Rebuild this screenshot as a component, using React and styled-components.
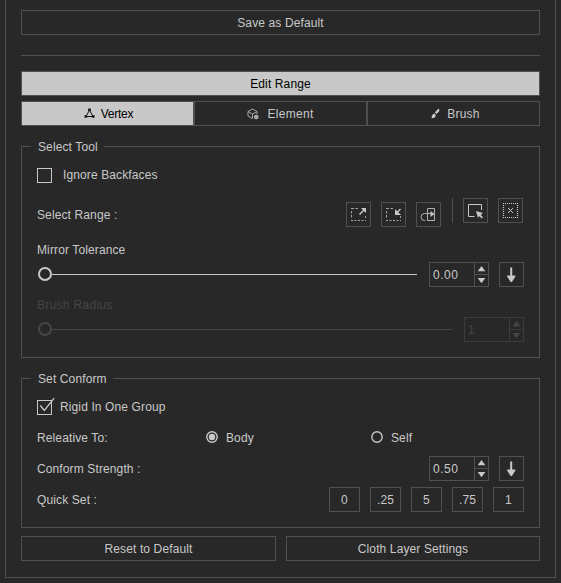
import React from "react";
import styled, { createGlobalStyle, css } from "styled-components";

const BG = "#282828";
const LINE = "#505050";
const INK = "#c8c8c8";
const DIM = "#464646";

const GlobalStyle = createGlobalStyle`
  * { box-sizing: border-box; }
  body {
    margin: 0;
    background: ${BG};
    color: ${INK};
    font: 12px/16px "Liberation Sans", Arial, sans-serif;
    overflow: hidden;
  }
`;

const Panel = styled.main`
  width: 551px;
  height: 578px;
  margin-left: 5px;
  padding: 10px 15px 0;
  border: 1px solid ${LINE};
  border-top: 0;
`;

const Label = styled.span`
  letter-spacing: ${(p) => p.$track ?? 0.12}px;
  margin-bottom: ${(p) => p.$lift ?? 0}px;
  white-space: pre;
  color: ${(p) => (p.$dim ? DIM : "inherit")};
`;

const Button = styled.button`
  display: flex;
  align-items: center;
  justify-content: center;
  width: ${(p) => p.$w ?? 25}px;
  height: 25px;
  padding: 0;
  font: inherit;
  border: 1px solid ${LINE};
  background: ${(p) => (p.$on ? INK : BG)};
  color: ${(p) => (p.$on ? "#000" : INK)};
`;

const Rule = styled.hr`
  height: 1px;
  margin: 20px 0 15px;
  border: 0;
  background: ${LINE};
`;

const Tabs = styled.nav`
  display: flex;
  margin-top: 5px;
`;

const TabIcon = styled.svg`
  flex: none;
  margin-left: ${(p) => p.$indent ?? 0}px;
  margin-right: ${(p) => p.$gap}px;
`;

const Group = styled.section`
  display: flex;
  flex-direction: column;
  height: ${(p) => p.$h}px;
  margin-top: ${(p) => p.$top}px;
  padding: 0 15px;
  border: 1px solid ${LINE};
`;

const Legend = styled.h2`
  align-self: flex-start;
  flex: none;
  height: 16px;
  margin: -8px 0 0 -6px;
  padding: 0 6px 0 7px;
  font: inherit;
  background: ${BG};
`;

const Row = styled.div`
  display: flex;
  flex: none;
  align-items: center;
  height: ${(p) => p.$h ?? 25}px;
  margin-top: ${(p) => p.$top ?? 0}px;
`;

const Spacer = styled.div`
  flex: 1;
`;

const Check = styled.svg`
  flex: none;
  margin-right: ${(p) => p.$gap}px;
  overflow: visible;
`;

const Tools = styled.div`
  display: flex;
  gap: ${(p) => p.$gap ?? 10}px;
  margin-right: ${(p) => p.$right ?? 0}px;
`;

const ToolPair = styled(Tools)`
  align-self: flex-start;
  padding-left: 10px;
  margin-left: 11px;
  border-left: 1px solid ${LINE};
`;

const RangeTools = styled(Tools)`
  align-self: flex-end;
`;

const RangeLabel = styled(Label)`
  padding-top: 4px;
`;

const Knob = styled.div`
  flex: none;
  width: 14px;
  height: 14px;
  margin: 0 0 1px 1px;
  border: 2px solid ${(p) => (p.$dim ? DIM : INK)};
  border-radius: 50%;
`;

const Track = styled.div`
  flex: 1;
  height: 1px;
  margin-right: 12px;
  background: ${(p) => (p.$dim ? DIM : INK)};
`;

const SpinBox = styled.div`
  display: grid;
  grid-template-columns: 1fr 14px;
  flex: none;
  width: 60px;
  height: 25px;
  border: 1px solid ${(p) => (p.$dim ? "#3c3c3c" : LINE)};
  color: ${(p) => (p.$dim ? DIM : INK)};
  ${(p) =>
    p.$gap &&
    css`
      margin-right: 10px;
    `}
`;

const SpinValue = styled.span`
  padding-left: 3px;
  line-height: 24px;
  letter-spacing: 0.5px;
`;

const SpinArrows = styled.svg`
  display: block;
`;

const Radio = styled.label`
  display: flex;
  align-items: center;
  gap: 8px;
  width: ${(p) => p.$w}px;
`;

const RadioDot = styled.svg`
  flex: none;
  margin-top: -1px;
`;

const Footer = styled.footer`
  display: flex;
  gap: 10px;
  margin-top: 8px;
`;

function Spin({ value, dim, gap }) {
  const line = dim ? "#3c3c3c" : LINE;
  return (
    <SpinBox $dim={dim} $gap={gap}>
      <SpinValue>{value}</SpinValue>
      <SpinArrows width="14" height="23">
        <path d="M0 0h1v23H0zM1 11h13v1H1z" fill={line} />
        <path d="M7.500 3l3.800 5.200H3.700zM7.500 20.200l3.800-5.200H3.700z" fill="currentColor" />
      </SpinArrows>
    </SpinBox>
  );
}

function ResetButton() {
  return (
    <Button aria-label="Apply">
      <svg width="23" height="23">
        <path d="M10.200 4.500h2V12.500H15.300v1.200L11.900 19h-1.200L7.200 13.700V12.500h3z" fill={INK} />
      </svg>
    </Button>
  );
}

function CheckBox({ checked, gap }) {
  return (
    <Check width="15" height="15" $gap={gap}>
      <rect x=".5" y=".5" width="14" height="14" fill="none" stroke={INK} />
      {checked && (
        <path d="M3.3 5.500l4 5L17.200-1.800" fill="none" stroke={INK} strokeWidth="1.300" />
      )}
    </Check>
  );
}

function RadioMark({ on }) {
  return (
    <RadioDot width="12" height="12">
      <circle cx="6" cy="6" r="5.2" fill="none" stroke={INK} strokeWidth="1.4" />
      {on && <circle cx="6" cy="6" r="3.2" fill={INK} />}
    </RadioDot>
  );
}

const ToolIcon = ({ children }) => (
  <svg width="23" height="23" fill="none" stroke={INK}>
    {children}
  </svg>
);

const Dashes = () => (
  <path
    stroke="#a4a4a4"
    d="M4 5.500h3M8.500 5.500h2.500M4.500 8v2.500M4.500 12v2.500M4 17.500h2M7.500 17.500h2M11 17.500h2M14.500 17.500h2M18 17.500h1M18.500 13v2"
  />
);

export default function App() {
  return (
    <>
      <GlobalStyle />
      <Panel>
        <Button $w={519}>
          <Label>Save as Default</Label>
        </Button>
        <Rule />
        <Button $w={519} $on>
          <Label>Edit Range</Label>
        </Button>
        <Tabs>
          <Button $w={173} $on>
            <TabIcon width="11" height="11" $gap={6} $indent={2}>
              <path d="M5.500 2L2 8.500h7z" fill="none" stroke="#111" />
              <path d="M4.200.5h2.600v2.600H4.200zM.5 7.200h2.600v2.600H.5zM7.900 7.200h2.600v2.600H7.900z" fill="#111" />
            </TabIcon>
            <Label $track={-0.25}>Vertex</Label>
          </Button>
          <Button $w={173}>
            <TabIcon width="12" height="12" $gap={8}>
              <path
                d="M5 10.500L1 8V3.500L5.500 1 10 3.500V6M1 3.500L5.500 6 10 3.500M5.500 6v4.500"
                fill="none"
                stroke="#a8a8a8"
              />
              <path d="M9.200 6.500l2.300 1.300v2.500L9.200 11.600 7 10.300V7.800z" fill="#a8a8a8" />
            </TabIcon>
            <Label $track={0.3}>Element</Label>
          </Button>
          <Button $w={173}>
            <TabIcon width="9" height="11" $gap={7} $indent={4}>
              <path d="M7.200.8L8.500 1.500 8 3.500 5.500 6 3.800 4.400z" fill={INK} />
              <path d="M3 5.200l1.800 1.700-.8 2.500L.5 10.500 1 7.500z" fill={INK} />
            </TabIcon>
            <Label $track={0.2}>Brush</Label>
          </Button>
        </Tabs>

        <Group $top={20} $h={212}>
          <Legend>
            <Label>Select Tool</Label>
          </Legend>
          <Row $top={8}>
            <CheckBox gap={11} />
            <Label $lift={2}>Ignore Backfaces</Label>
          </Row>
          <Row $top={10} $h={29}>
            <RangeLabel>Select Range :</RangeLabel>
            <Spacer />
            <RangeTools>
              <Button aria-label="Grow selection">
                <ToolIcon>
                  <Dashes />
                  <path d="M12.500 11.500l5-5" strokeWidth="1.400" />
                  <path d="M14 5h5v5z" fill={INK} stroke="none" />
                </ToolIcon>
              </Button>
              <Button aria-label="Shrink selection">
                <ToolIcon>
                  <Dashes />
                  <path d="M18.500 6L15 9.500" strokeWidth="1.400" />
                  <path d="M13 6v6h6z" fill={INK} stroke="none" />
                </ToolIcon>
              </Button>
              <Button aria-label="Mirror selection">
                <ToolIcon>
                  <path d="M10.500 5.500h7v12h-7z" stroke="#b0b0b0" />
                  <path d="M8.500 17.500H7.500a3.500 3.500 0 010-7H14" stroke="#b0b0b0" />
                  <path d="M13.500 8l4 3-4 3z" fill={INK} stroke="none" />
                </ToolIcon>
              </Button>
            </RangeTools>
            <ToolPair $right={1}>
              <Button aria-label="Box select">
                <ToolIcon>
                  <path d="M10.500 17.500H4.500v-12h13V11" />
                  <path d="M14 14l4.300 4.800" strokeWidth="1.800" />
                  <path d="M12 12l6.800 2-4.800 4.800z" fill={INK} stroke="none" />
                </ToolIcon>
              </Button>
              <Button aria-label="Clear selection">
                <ToolIcon>
                  <path d="M4 4.500h15M4 18.500h15M4.500 4v15M18.500 4v15" strokeWidth="1.200" strokeDasharray="1 1" />
                  <path d="M9 9l5 5M14 9l-5 5" />
                </ToolIcon>
              </Button>
            </ToolPair>
          </Row>
          <Row $top={14} $h={17}>
            <Label>Mirror Tolerance</Label>
          </Row>
          <Row $top={4}>
            <Knob />
            <Track />
            <Spin value="0.00" gap />
            <ResetButton />
          </Row>
          <Row $top={10} $h={16}>
            <Label $dim $track={0.3}>Brush Radius</Label>
          </Row>
          <Row $top={4}>
            <Knob $dim />
            <Track $dim />
            <Spin value="1" dim />
          </Row>
        </Group>

        <Group $top={20} $h={150}>
          <Legend>
            <Label>Set Conform</Label>
          </Legend>
          <Row $top={8}>
            <CheckBox checked gap={8} />
            <Label $lift={2}>Rigid In One Group</Label>
          </Row>
          <Row $top={5}>
            <Radio as="div" $w={169}>
              <Label>Releative To:</Label>
            </Radio>
            <Radio $w={165}>
              <RadioMark on />
              <Label>Body</Label>
            </Radio>
            <Radio $w={80}>
              <RadioMark />
              <Label>Self</Label>
            </Radio>
          </Row>
          <Row $top={6}>
            <Label>Conform Strength :</Label>
            <Spacer />
            <Spin value="0.50" gap />
            <ResetButton />
          </Row>
          <Row $top={6}>
            <Label>Quick Set :</Label>
            <Spacer />
            <Tools>
              {["0", ".25", "5", ".75", "1"].map((value) => (
                <Button key={value} $w={31}>
                  <Label>{value}</Label>
                </Button>
              ))}
            </Tools>
          </Row>
        </Group>

        <Footer>
          <Button $w={255}>
            <Label>Reset to Default</Label>
          </Button>
          <Button $w={254}>
            <Label>Cloth Layer Settings</Label>
          </Button>
        </Footer>
      </Panel>
    </>
  );
}
